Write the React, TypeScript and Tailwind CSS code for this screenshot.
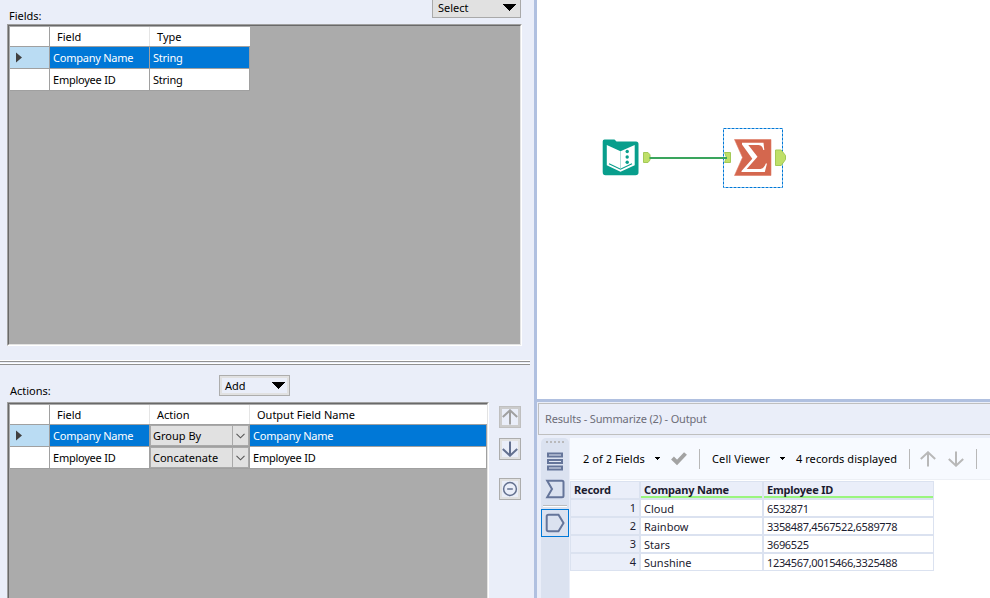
import React from "react";

const ui = "font-['Noto_Sans','Segoe_UI',sans-serif]";

function Txt({ children, className = "" }: { children: React.ReactNode; className?: string }) {
  return <span className={`whitespace-pre ${className}`}>{children}</span>;
}

function DropButton({ label, className }: { label: string; className: string }) {
  return (
    <div className={`flex items-center justify-between border border-[#a9a9a9] bg-[#e1e1e1] shrink-0 ${className}`}>
      <Txt>{label}</Txt>
      <svg width="13" height="7" viewBox="0 0 13 7" shapeRendering="crispEdges"><path d="M0 0H13L6.5 7Z" fill="#000" /></svg>
    </div>
  );
}

function RowHead({ active = false }: { active?: boolean }) {
  return (
    <div className={`flex w-[40px] shrink-0 items-center border-r border-[#a0a0a0] pl-[6px] ${active ? "bg-[#badcf3]" : "bg-white"}`}>
      {active && <svg width="7" height="11" viewBox="0 0 7 11"><path d="M0 .5V10.500L6 5.500Z" fill="#404040" /></svg>}
    </div>
  );
}

function HeadCell({ children, className }: { children?: React.ReactNode; className: string }) {
  return <div className={`flex shrink-0 items-center border-[#e5e5e5] pl-[7px] ${className}`}><Txt>{children}</Txt></div>;
}

function Cell({ children, active, className }: { children: React.ReactNode; active?: boolean; className: string }) {
  return (
    <div className={`flex shrink-0 items-center border-r border-[#a0a0a0] pl-[3px] tracking-[-0.24px] ${active ? "bg-[#0078d7] text-white" : "bg-white"} ${className}`}>
      <Txt>{children}</Txt>
    </div>
  );
}

function Combo({ label }: { label: string }) {
  return (
    <div className="flex w-[100px] shrink-0 border-r border-[#a0a0a0]">
      <div className="flex flex-1 border border-[#a9a9a9] bg-[#e1e1e1]">
        <div className="flex w-[82px] items-center border-r border-[#a9a9a9] pl-[2px]"><Txt>{label}</Txt></div>
        <div className="flex flex-1 items-center justify-center">
          <svg width="9" height="6" viewBox="0 0 9 6" fill="none"><path d="M.5 .8L4.5 4.8L8.5 .8" stroke="#555" strokeWidth="1.1" /></svg>
        </div>
      </div>
    </div>
  );
}

const row = "flex h-[22px] border-b border-[#a0a0a0]";
const gridFrame = "ml-[7px] border border-t-[#a0a0a0] border-l-[#a0a0a0] border-r-white border-b-white shrink-0";
const gridInner = "h-full border border-t-[#696969] border-l-[#696969] border-r-[#e3e3e3] border-b-[#e3e3e3] bg-[#ababab] pt-px pl-px";

function FieldsGrid() {
  return (
    <div className={`${gridFrame} h-[322px] w-[515px]`}>
      <div className={gridInner}>
        <div className="w-[240px]">
          <div className="flex h-[20px] border-b border-[#a0a0a0] bg-white">
            <RowHead />
            <HeadCell className="w-[100px] border-r">Field</HeadCell>
            <HeadCell className="w-[100px]">Type</HeadCell>
          </div>
          <div className={row}>
            <RowHead active />
            <Cell active className="w-[100px]">Company Name</Cell>
            <Cell active className="w-[100px]">String</Cell>
          </div>
          <div className={row}>
            <RowHead />
            <Cell className="w-[100px]">Employee ID</Cell>
            <Cell className="w-[100px]">String</Cell>
          </div>
        </div>
      </div>
    </div>
  );
}

function ActionsGrid() {
  return (
    <div className={`${gridFrame} h-[200px] w-[482px]`}>
      <div className={gridInner}>
        <div className="w-[477px]">
          <div className="flex h-[20px] border-b border-[#a0a0a0] bg-white">
            <RowHead />
            <HeadCell className="w-[100px] border-r">Field</HeadCell>
            <HeadCell className="w-[100px] border-r">Action</HeadCell>
            <HeadCell className="w-[237px]">Output Field Name</HeadCell>
          </div>
          <div className={row}>
            <RowHead active />
            <Cell active className="w-[100px]">Company Name</Cell>
            <Combo label="Group By" />
            <Cell active className="w-[237px]">Company Name</Cell>
          </div>
          <div className={row}>
            <RowHead />
            <Cell className="w-[100px]">Employee ID</Cell>
            <Combo label="Concatenate" />
            <Cell className="w-[237px]">Employee ID</Cell>
          </div>
        </div>
      </div>
    </div>
  );
}

function ToolButton({ children, disabled }: { children: React.ReactNode; disabled?: boolean }) {
  return (
    <div className={`flex h-[22px] w-[22px] items-center justify-center border ${disabled ? "border-[#bfbfbf] bg-[#cccccc]" : "border-[#adadad] bg-[#e1e1e1]"}`}>
      <div className="flex h-[16px] w-[16px] items-center justify-center bg-[#eaeef9]">{children}</div>
    </div>
  );
}

function Arrow({ down, color, width = 2 }: { down?: boolean; color: string; width?: number }) {
  return (
    <svg width="16" height="16" viewBox="0 0 16 16" fill="none" className={down ? "rotate-180" : ""}>
      <path d="M8 1.3V15.5M.8 8L8 1.3L15.2 8" stroke={color} strokeWidth={width} />
    </svg>
  );
}

function ConfigPanel() {
  return (
    <div className="flex h-full w-[534px] shrink-0 flex-col bg-[#eaeef9]">
      <div className="flex h-[24px] shrink-0 items-start justify-between pl-[9px] pr-[13px]">
        <Txt className="pt-[8px]">Fields:</Txt>
        <DropButton label="Select" className="-mt-[3px] h-[21px] w-[89px] pr-[4px] pl-[5px]" />
      </div>
      <FieldsGrid />
      <div className="mt-[14px] h-[5px] w-[530px] shrink-0 border-t border-white">
        <div className="h-[4px] border-y border-[#919191]"><div className="h-[2px] border-b border-white" /></div>
      </div>
      <div className="flex h-[37px] shrink-0 pl-[10px]">
        <Txt className="w-[209px] pt-[18px]">Actions:</Txt>
        <DropButton label="Add" className="mt-[10px] h-[21px] w-[71px] border-[#adadad] pr-[4px] pl-[5px] shadow-[inset_0_0_0_2px_#e1e1e1] !bg-[#eaeef9]" />
      </div>
      <div className="flex">
        <ActionsGrid />
        <div className="ml-[10px] flex flex-col pt-[4px]">
          <ToolButton disabled><Arrow color="#a0a0a0" /></ToolButton>
          <div className="mt-[10px]"><ToolButton><Arrow down color="#63708f" /></ToolButton></div>
          <div className="mt-[18px]">
            <ToolButton>
              <svg width="16" height="16" viewBox="0 0 16 16" fill="none" stroke="#63708f" strokeWidth="1.5"><circle cx="8" cy="8" r="6.4" /><path d="M5.2 8H10.8" /></svg>
            </ToolButton>
          </div>
        </div>
      </div>
    </div>
  );
}

function Canvas() {
  return (
    <div className="relative h-[399px] w-full bg-white">
      <svg className="absolute top-[120px] left-[53px]" width="210" height="76" viewBox="590 120 210 76">
        <path d="M604.500 139.500H614.500L616.500 141.500H636Q638.500 141.500 638.500 144V172.500Q638.500 175.300 635.500 175.300H605.500Q602.700 175.300 602.700 172V141.500Q602.700 139.500 604.500 139.500Z" fill="#089e8c" />
        <path d="M606.800 145L620.500 151.300L634.700 145V165.200L620.500 171.800L606.800 165.200Z" fill="#fff" />
        <path d="M620.500 151V168" stroke="#9ed6cf" strokeWidth=".8" />
        <path d="M609 163.800L620.500 169.200L632 163.800" fill="none" stroke="#089e8c" strokeWidth="1.200" />
        <g fill="#089e8c"><circle cx="627.200" cy="151.500" r="1.700" /><circle cx="627.200" cy="157" r="1.700" /><circle cx="627.200" cy="162.200" r="1.700" /></g>
        <path d="M643.500 152.500H648L650 154.800V160L648 162.500H643.500Z" fill="#bfdf68" stroke="#a3c957" />
        <path d="M649.500 158H727" stroke="#3aa55d" strokeWidth="2" />
        <rect x="723.500" y="128.500" width="59" height="59" fill="none" stroke="#0078d7" strokeDasharray="3 1" />
        <path d="M724.500 152.500H730.500V162.500H724.500L726.500 157.500Z" fill="#bfdf68" stroke="#a3c957" />
        <path d="M723 158H727" stroke="#3aa55d" strokeWidth="2" />
        <path d="M734.500 139.500H771V175.500H734.500L742.500 157.500Z" fill="#d4674e" stroke="#df7b65" strokeWidth=".6" />
        <path d="M742 142.700H763.500L764.300 150H763.300C762.500 146.200 760.700 145 757.200 145H748.300L757.500 156.800L746.700 169H758.800C762.800 169 764.400 167.200 765.800 163.500H767L764.800 172H741.500V170.900L752.300 158.700L742 144.600Z" fill="#fff" />
        <path d="M775.500 150H781.200L785.500 155.500V159.500L781.200 165.500H775.500Z" fill="#bfdf68" stroke="#a3c957" />
      </svg>
    </div>
  );
}

function Caret() {
  return <svg width="5" height="3" viewBox="0 0 5 3" shapeRendering="crispEdges"><path d="M0 0H5L2.5 3Z" fill="#000" /></svg>;
}

function ResultsSidebar() {
  return (
    <div className="ml-[4px] flex w-[28px] shrink-0 flex-col items-center rounded-t-[5px] bg-[#dbe2f0]">
      <div className="mt-[3px] flex gap-[2px]">
        {Array.from({ length: 5 }, (_, i) => <div key={i} className="h-[2px] w-[2px] bg-[#b9b9bb]" />)}
      </div>
      <svg className="mt-[9px]" width="18" height="20" viewBox="0 0 18 20" fill="#e2e8f4" stroke="#65759a" strokeWidth="2"><rect x="2" y="1.500" width="14" height="3" /><rect x="2" y="8" width="14" height="3" /><rect x="2" y="14.500" width="14" height="3" /></svg>
      <svg className="mt-[7px]" width="20" height="20" viewBox="0 0 20 20" fill="none" stroke="#65759a" strokeWidth="2"><path d="M2.200 1.700H17Q18.500 1.700 18.500 3.200V16.800Q18.500 18.300 17 18.300H2.200L7 10Z" /></svg>
      <div className="mt-[6px] h-[2px] w-[24px] border-t border-[#bcbcbc] bg-white" />
      <div className="mt-[2px] flex h-[28px] w-[28px] shrink-0 items-center justify-center border border-[#0078d7]">
        <svg width="20" height="20" viewBox="0 0 20 20" fill="none" stroke="#65759a" strokeWidth="2"><path d="M3.500 1.700H13.500L18.500 10L13.500 18.300H3.500Q1.700 18.300 1.700 16.500V3.500Q1.700 1.700 3.500 1.700Z" /></svg>
      </div>
    </div>
  );
}

const records = [
  ["Cloud", "6532871"],
  ["Rainbow", "3358487,4567522,6589778"],
  ["Stars", "3696525"],
  ["Sunshine", "1234567,0015466,3325488"],
];

function ResultsTable() {
  const line = "border-[#dbe2f0]";
  return (
    <div className="mt-px w-[364px] border border-[#dbe2f0] text-[#1c1c30]">
      <div className="flex h-[18px] border-b-2 border-[#dbe2f0] bg-[#eaeef9] font-bold tracking-[-0.2px]">
        <div className={`flex w-[70px] items-center border-r-2 pb-px pl-[3px] ${line}`}><Txt>Record</Txt></div>
        <div className={`flex w-[123px] items-center border-r-2 ${line}`}><div className="flex h-full w-full items-center border-b-2 border-[#9af57e] pl-[3px]"><Txt>Company Name</Txt></div></div>
        <div className="flex flex-1 items-center border-b-2 border-[#9af57e] pl-[3px]"><Txt>Employee ID</Txt></div>
      </div>
      {records.map(([company, ids], i) => (
        <div key={company} className={`flex bg-white ${i < 3 ? "h-[18px] border-b-2" : "h-[16px]"} ${line}`}>
          <div className={`flex w-[70px] items-center justify-end border-r-2 bg-[#eaeef9] pr-[3px] pb-[2px] ${line}`}><Txt>{i + 1}</Txt></div>
          <div className={`flex w-[123px] items-center border-r-2 pl-[3px] ${line}`}><Txt>{company}</Txt></div>
          <div className="flex flex-1 items-center pl-[3px] tracking-[-0.34px]"><Txt>{ids}</Txt></div>
        </div>
      ))}
    </div>
  );
}

function Results() {
  return (
    <div className="flex flex-1 flex-col border-t-[3px] border-[#b0c0e0] bg-[#eaeef9]">
      <div className="mt-px ml-px flex h-[32px] shrink-0 items-center border-y border-l border-[#bfbfbf] pb-px pl-[6px] tracking-[-0.16px] text-[#6d6d78]"><Txt>Results - Summarize (2) - Output</Txt></div>
      <div className="mt-[3px] flex min-h-0 flex-1">
        <ResultsSidebar />
        <div className="ml-[1px] flex flex-1 flex-col bg-white">
          <div className="flex h-[42px] shrink-0 items-center border-b border-[#edf0f5] bg-[#f7faff] pl-[13px]">
            <Txt className="w-[72px] tracking-[0.05px]">2 of 2 Fields</Txt>
            <Caret />
            <svg className="ml-[10px]" width="18" height="15" viewBox="0 0 18 15"><path d="M2.500 7L7 11.500L15.500 2.500" fill="none" stroke="#a3a3a3" strokeWidth="4" /></svg>
            <div className="ml-[11px] h-[20px] w-px bg-[#b8b8b8]" />
            <Txt className="ml-[12px] w-[68px] tracking-[0.12px]">Cell Viewer</Txt>
            <Caret />
            <Txt className="ml-[11px] w-[113px] tracking-[0.05px]">4 records displayed</Txt>
            <div className="mr-[10px] h-[20px] w-px bg-[#b8b8b8]" />
            <Arrow color="#b8b8b8" />
            <div className="ml-[12px]"><Arrow down color="#b8b8b8" /></div>
            <div className="ml-[12px] h-[20px] w-px bg-[#b8b8b8]" />
          </div>
          <ResultsTable />
        </div>
      </div>
    </div>
  );
}

export default function App() {
  return (
    <div className={`flex h-[598px] w-[990px] overflow-hidden bg-white text-[11px] leading-[15px] text-black ${ui}`}>
      <ConfigPanel />
      <div className="w-[3px] shrink-0 bg-[#b0c0e0]" />
      <div className="flex min-w-0 flex-1 flex-col">
        <Canvas />
        <Results />
      </div>
    </div>
  );
}
